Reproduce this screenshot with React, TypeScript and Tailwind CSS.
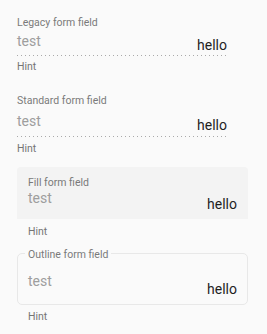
const label = "text-[10.5px] leading-[12px] text-[#7a7a7a]";
const hint = "text-[10.5px] leading-[12px] text-[#757575]";
const value = "text-[14px] leading-[16px] text-[#9e9e9e]";
const suffix = "text-[14px] leading-[16px] text-[#1f1f1f]";

function Dotted() {
  return (
    <div className="h-px bg-[linear-gradient(to_right,rgba(0,0,0,0.32)_0%,rgba(0,0,0,0.32)_33%,transparent_0%)] bg-[length:4px_100%] bg-repeat-x" />
  );
}

export default function App() {
  return (
    <div className="h-[334px] w-[267px] bg-[#fafafa] pl-[17px] pt-[17px] font-['Roboto',sans-serif]">
      {/* legacy */}
      <div className="w-[210px]">
        <div className={label}>Legacy form field</div>
        <div className="mt-[4px] flex h-[22px] justify-between">
          <span className={value}>test</span>
          <span className={`pt-[4px] ${suffix}`}>hello</span>
        </div>
        <Dotted />
        <div className={`mt-[5px] ${hint}`}>Hint</div>
      </div>

      {/* standard */}
      <div className="mt-[22px] w-[210px]">
        <div className={label}>Standard form field</div>
        <div className="mt-[6px] flex h-[23px] justify-between">
          <span className={value}>test</span>
          <span className={`pt-[4px] ${suffix}`}>hello</span>
        </div>
        <Dotted />
        <div className={`mt-[6px] ${hint}`}>Hint</div>
      </div>

      {/* fill */}
      <div className="mt-[12px] w-[231px]">
        <div className="h-[52px] rounded-t-[4px] bg-[#f3f3f3] px-[11px] pt-[10px]">
          <div className={label}>Fill form field</div>
          <div className="mt-[1px] flex justify-between">
            <span className={value}>test</span>
            <span className={`pt-[6px] ${suffix}`}>hello</span>
          </div>
        </div>
        <div className={`mt-[7px] pl-[11px] ${hint}`}>Hint</div>
      </div>

      {/* outline */}
      <div className="mt-[15px] w-[231px]">
        <div className="relative h-[52px] rounded-[5px] border border-[#e8e8e8] px-[10px] pt-[19px]">
          <div className={`absolute left-[7px] top-[-5px] bg-[#fafafa] px-[3px] ${label}`}>Outline form field</div>
          <div className="flex justify-between">
            <span className={value}>test</span>
            <span className={`pt-[8px] ${suffix}`}>hello</span>
          </div>
        </div>
        <div className={`mt-[6px] pl-[11px] ${hint}`}>Hint</div>
      </div>
    </div>
  );
}
